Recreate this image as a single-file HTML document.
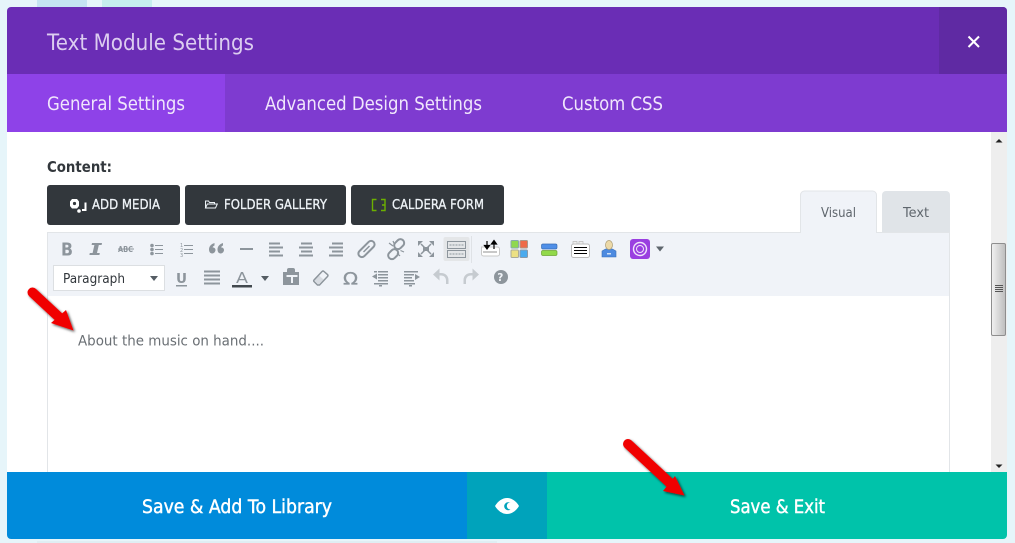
<!DOCTYPE html>
<html lang="en"><head><meta charset="utf-8"><title>Text Module Settings</title>
<style>
html,body{margin:0;padding:0;width:1015px;height:543px;overflow:hidden;background:#e6f5fa}
svg{display:block;position:absolute;left:0;top:0}
text{font-family:"DejaVu Sans","Liberation Sans",sans-serif}
</style></head><body>
<svg width="1015" height="543" viewBox="0 0 1015 543" xmlns="http://www.w3.org/2000/svg">
<defs>
<linearGradient id="th" x1="0" x2="1" y1="0" y2="0"><stop offset="0" stop-color="#f2f2f2"/><stop offset="1" stop-color="#bdbdbd"/></linearGradient>
<filter id="sh" x="-30%" y="-30%" width="170%" height="170%"><feDropShadow dx="1.500" dy="1.500" stdDeviation="1.200" flood-color="#000" flood-opacity=".65"/></filter>
<clipPath id="modal"><rect x="7" y="7" width="1000" height="532" rx="4"/></clipPath>
</defs>
<rect width="1015" height="543" fill="#e6f5fa"/>
<rect x="37" width="50" height="7" fill="#c5e4f2"/><rect x="102" width="50" height="7" fill="#c6eeee"/>
<rect x="37" y="541" width="460" height="2" fill="#dfeef3"/>
<g clip-path="url(#modal)">
<rect x="7" y="7" width="1000" height="532" fill="#fff"/>
<rect x="7" y="7" width="1000" height="67" fill="#6a2db5"/>
<rect x="939" y="7" width="68" height="67" fill="#5f2aa3"/>
<rect x="7" y="74" width="1000" height="58" fill="#7e3bd0"/>
<rect x="7" y="74" width="218" height="58" fill="#8e42e8"/>
<!-- scrollbar -->
<rect x="991" y="132" width="16" height="340" fill="#eeeeee"/>
<rect x="991.500" y="243.500" width="14" height="92" rx="1.500" fill="url(#th)" stroke="#8e8e8e"/>
<path d="M995 285.500h8M995 287.500h8M995 289.500h8M995 291.500h8" stroke="#555" stroke-width="1"/>
<path d="M999 139l-3.500 3.500h7z" fill="#222"/><path d="M999 468l-3.500-3.500h7z" fill="#222"/>
</g>
<text x="47" y="50" font-size="22.500" fill="#dccdf0" textLength="207" lengthAdjust="spacingAndGlyphs">Text Module Settings</text>
<path d="M968.500 36.500l10.500 10.500M979 36.500l-10.500 10.500" stroke="#fff" stroke-width="2"/>
<text x="47" y="110" font-size="18.500" fill="#f0e6fc" textLength="138" lengthAdjust="spacingAndGlyphs">General Settings</text>
<text x="265" y="110" font-size="18.500" fill="#f0e6fc" textLength="217" lengthAdjust="spacingAndGlyphs">Advanced Design Settings</text>
<text x="562" y="110" font-size="18.500" fill="#f0e6fc" textLength="101" lengthAdjust="spacingAndGlyphs">Custom CSS</text>
<text x="47" y="172" font-size="15.500" font-weight="bold" fill="#32373c" textLength="65" lengthAdjust="spacingAndGlyphs">Content:</text>
<!-- media buttons -->
<rect x="47" y="185" width="133" height="40" rx="3" fill="#32373c"/>
<rect x="185" y="185" width="161" height="40" rx="3" fill="#32373c"/>
<rect x="351" y="185" width="153" height="40" rx="3" fill="#32373c"/>
<path d="M70 201.500l2-2.500h5l2 2.500v4.500l-2 2.500h-5l-2-2.500z" fill="#fff"/><circle cx="74.500" cy="203.500" r="1.600" fill="#32373c"/>
<path d="M84.500 202.500h2v8.500h-4.500v-2h2.500z" fill="#fff"/><circle cx="79" cy="211" r="1.800" fill="#fff"/>
<text x="92" y="209" font-size="13" fill="#eef3f7" stroke="#eef3f7" stroke-width=".3" textLength="68" lengthAdjust="spacingAndGlyphs">ADD MEDIA</text>
<path d="M205.500 208v-7h3l1 1.500h5v1.500M205.500 208h10l1.800-4h-10z" fill="none" stroke="#eef3f7" stroke-width="1"/>
<text x="224" y="209" font-size="13" fill="#eef3f7" stroke="#eef3f7" stroke-width=".3" textLength="103" lengthAdjust="spacingAndGlyphs">FOLDER GALLERY</text>
<path d="M376.500 199.500h-4v11h4M381 199.500h4v11h-4M382 205h3" fill="none" stroke="#6cb000" stroke-width="1.400"/>
<text x="392" y="209" font-size="13" fill="#eef3f7" stroke="#eef3f7" stroke-width=".3" textLength="92" lengthAdjust="spacingAndGlyphs">CALDERA FORM</text>
<!-- editor -->
<rect x="47.500" y="232.500" width="902" height="260" fill="#fff" stroke="#e2e5e8"/>
<rect x="48" y="233" width="901" height="63" fill="#f0f3f8"/>
<path d="M800.500 232v-37a4 4 0 0 1 4-4h68a4 4 0 0 1 4 4v37" fill="#f0f3f8" stroke="#e2e5e8"/>
<rect x="801" y="231" width="75" height="3" fill="#f0f3f8"/>
<path d="M882 232v-37a4 4 0 0 1 4-4h60a4 4 0 0 1 4 4v37z" fill="#e0e4e8"/>
<text x="821" y="217" font-size="13" fill="#5f666d" textLength="35" lengthAdjust="spacingAndGlyphs">Visual</text>
<text x="903" y="217" font-size="13" fill="#5f666d" textLength="26" lengthAdjust="spacingAndGlyphs">Text</text>
<!-- footer -->
<path d="M7 472h460v67h-456a4 4 0 0 1-4-4z" fill="#008bdb"/>
<rect x="467" y="472" width="80" height="67" fill="#00a3bb"/>
<path d="M547 472h460v63a4 4 0 0 1-4 4h-456z" fill="#00c3aa"/>
<!-- toolbar row 1 -->
<g fill="#8d959c" stroke="none">
<text x="61" y="255.500" font-size="17.500" font-weight="bold" textLength="12" lengthAdjust="spacingAndGlyphs">B</text>
<path d="M92 243h10l-.4 2h-2.800l-1.800 8h2.800l-.4 2h-10l.4-2h2.800l1.800-8h-2.800z"/>
<text x="118" y="252" font-size="8" font-weight="bold" textLength="15" lengthAdjust="spacingAndGlyphs">ABC</text>
<rect x="118" y="248.500" width="16" height="1"/>
<circle cx="152" cy="245.500" r="1.800"/><circle cx="152" cy="249.500" r="1.800"/><circle cx="152" cy="253.500" r="1.800"/>
<path d="M155 245h8v1h-8zM155 249h8v1h-8zM155 253h8v1h-8z"/>
<text x="180" y="247" font-size="5">1</text><text x="180" y="252" font-size="5">2</text><text x="180" y="257" font-size="5">3</text>
<path d="M184 245h9v1h-9zM184 249h9v1h-9zM184 253h9v1h-9z"/>
<path d="M209 249.500c0-3 2-5.500 5.500-6.500v2.500c-1 .5-1.800 1-1.800 2 1.700 0 2.800 1 2.800 2.500s-1.300 3.500-3.300 3.500-3.200-1.800-3.200-4zM217.500 249.500c0-3 2-5.500 5.500-6.500v2.500c-1 .5-1.800 1-1.800 2 1.700 0 2.800 1 2.800 2.500s-1.300 3.500-3.300 3.500-3.200-1.800-3.200-4z"/>
<rect x="240" y="248" width="13" height="2"/>
<path d="M269 243h11v2h-11zM269 247h14v2h-14zM269 251h11v2h-11zM269 255h14v2h-14z" transform="translate(0,-.5)"/>
<path d="M301 243h11v2h-11zM299 247h14v2h-14zM301 251h11v2h-11zM299 255h14v2h-14z" transform="translate(0,-.5)"/>
<path d="M332 243h11v2h-11zM329 247h14v2h-14zM332 251h11v2h-11zM329 255h14v2h-14z" transform="translate(0,-.5)"/>
</g>
<g fill="none" stroke="#8d959c">
<rect x="356.500" y="245.500" width="20" height="7" rx="3.500" transform="rotate(-45 366.500 249)" stroke-width="2"/>
<path d="M363.500 252l6-6" stroke-width="1.500"/>
<rect x="393.500" y="240.500" width="11" height="7.500" rx="3.700" transform="rotate(-45 399 244)" stroke-width="2"/>
<rect x="387.500" y="250.500" width="11" height="7.500" rx="3.700" transform="rotate(-45 393 254)" stroke-width="2"/>
<path d="M389 243l4 3M393 241l1.500 3.500M400 256l-3-3M404 252l-3.500-1.500" stroke-width="1.200"/>
<path d="M421 244l10 10M431 244l-10 10" stroke-width="1.500"/>
</g>
<g fill="#8d959c">
<path d="M418 241h5l-5 5zM434 241v5l-5-5zM418 257v-5l5 5zM434 257h-5l5-5z"/>
<rect x="423" y="247" width="6" height="4"/>
</g>
<rect x="443.500" y="237" width="26" height="24" rx="2" fill="#e4e6e8"/>
<rect x="447.500" y="241.500" width="18" height="7" fill="none" stroke="#8d959c"/><rect x="447.500" y="250.500" width="18" height="7" fill="none" stroke="#8d959c"/>
<path d="M449.500 245h14M449.500 254h14" stroke="#8d959c" stroke-dasharray="2 1"/>
<rect x="471" y="236" width="1" height="27" fill="#dfe2e6"/>
<!-- coloured plugin icons -->
<path d="M481.500 247h16a2 2 0 0 1 2 2v5a2 2 0 0 1-2 2h-14a2 2 0 0 1-2-2z" fill="#fff" stroke="#c8c8c8"/>
<path d="M487 241v7M484.500 245.500l2.500 3.500 2.500-3.500zM494 249v-7M491.500 244l2.500-3.500 2.500 3.500z" stroke="#000" stroke-width="1.200" fill="#000"/>
<path d="M483 252h14" stroke="#777" stroke-width=".8"/>
<rect x="511" y="240.500" width="7.500" height="7.500" rx="1" fill="#8fd84f" stroke="#8aa"/><rect x="520" y="240.500" width="7.500" height="7.500" rx="1" fill="#ee6b48" stroke="#a98"/>
<rect x="511" y="250" width="7.500" height="7.500" rx="1" fill="#ece083" stroke="#aa9"/><rect x="520" y="250" width="7.500" height="7.500" rx="1" fill="#4aaaee" stroke="#89a"/>
<rect x="541.500" y="244" width="15.500" height="5" rx="1.500" fill="#4f8fe8" stroke="#3a6fb5" stroke-width=".7"/>
<rect x="541.500" y="250.500" width="15.500" height="5" rx="1.500" fill="#92d94a" stroke="#6ea535" stroke-width=".7"/>
<rect x="571.500" y="244" width="18" height="13.500" rx="2" fill="#fff" stroke="#bbb"/>
<path d="M573 241.500h4v2.500h-4zM579 241.500h4v2.500h-4z" fill="#eee" stroke="#bbb" stroke-width=".7"/>
<path d="M574 247.500h13M574 250.500h13M574 253.500h13" stroke="#000" stroke-width="1"/>
<path d="M602 257v-6l3.500-2h7l3.500 2v6z" fill="#4d8ae0" stroke="#3a6fb5" stroke-width=".6"/>
<ellipse cx="609" cy="245" rx="3.500" ry="4.500" fill="#ecd9a8" stroke="#a9986e" stroke-width=".7"/>
<rect x="607" y="253" width="4" height="1.500" fill="#cfe0f7"/>
<rect x="630" y="239" width="20" height="20" rx="3" fill="#9a3fe0"/>
<circle cx="640" cy="249" r="6.500" fill="none" stroke="#f1e4fb" stroke-width="1.400"/>
<circle cx="640" cy="249" r="3.500" fill="none" stroke="#f1e4fb" stroke-width="1"/>
<path d="M656 246.500h8l-4 5z" fill="#5e666d"/>
<!-- row 2 -->
<rect x="53.500" y="265.500" width="111" height="25" fill="#fff" stroke="#dcdfe2"/>
<text x="63" y="283" font-size="13" fill="#32373c" textLength="62" lengthAdjust="spacingAndGlyphs">Paragraph</text>
<path d="M150 276h8l-4 5z" fill="#555d64"/>
<text x="176" y="283" font-size="13.500" font-weight="bold" fill="#8d959c" textLength="11" lengthAdjust="spacingAndGlyphs">U</text>
<rect x="176" y="285" width="11" height="1.500" fill="#8d959c"/>
<path d="M204 270.500h16v2h-16zM204 274.500h16v2h-16zM204 278.500h16v2h-16zM204 282.500h16v2h-16z" fill="#8d959c"/>
<text x="236" y="283" font-size="15" fill="#8d959c" textLength="12" lengthAdjust="spacingAndGlyphs">A</text>
<rect x="232" y="285" width="20" height="2.500" fill="#42484e"/>
<path d="M261 276h8l-4 5z" fill="#555d64"/>
<path d="M283 272h4v-2a2 2 0 0 1 2-2h4a2 2 0 0 1 2 2v2h4v13h-16z" fill="#8d959c"/>
<path d="M286.500 275h11v2h-4.500v6h-2v-6h-4.500z" fill="#f0f3f8"/>
<path d="M314 280l8-8.500a1.500 1.500 0 0 1 2 0l3.500 3a1.500 1.500 0 0 1 0 2l-8 8.500h-2l-3.500-3.500a1 1 0 0 1 0-1.500z" fill="#f0f3f8" stroke="#8d959c" stroke-width="1.500"/>
<path d="M314 280l4.500 4.500 5-5-5-4.500z" fill="#8d959c" opacity=".25"/>
<text x="343" y="284.500" font-size="17" fill="#8d959c" stroke="#8d959c" stroke-width=".3" textLength="15" lengthAdjust="spacingAndGlyphs">Ω</text>
<path d="M378 271h10v1.500h-10zM378 274h10v1.500h-10zM378 277h10v1.500h-10zM378 280h10v1.500h-10zM374 283h14v1.500h-14zM374 271h3v1.500h-3zM379 285h3v1.500h-3z" fill="#8d959c"/>
<path d="M372 276.500l5-3v6z" fill="#8d959c"/>
<path d="M404 271h14v1.500h-14zM404 274h10v1.500h-10zM404 277h8v1.500h-8zM404 280h10v1.500h-10zM404 283h11v1.500h-11zM409 285h3v1.500h-3z" fill="#8d959c"/>
<path d="M420 277l-5-3v6z" fill="#8d959c"/>
<path d="M433 274.500l6.500-6v4.500h1.500c4.500 0 7.500 3 7.500 7v4h-2.500v-3.500c0-3-2-5-5-5h-1.500v5z" fill="#c6cbd0"/>
<path d="M479 274.500l-6.500-6v4.500h-1.500c-4.500 0-7.500 3-7.500 7v4h2.500v-3.500c0-3 2-5 5-5h1.500v5z" fill="#c6cbd0"/>
<circle cx="501" cy="277" r="7" fill="#8d959c"/>
<text x="497.300" y="281" font-size="10.500" font-weight="bold" fill="#f0f3f8">?</text>
<!-- content -->
<text x="78" y="345.500" font-size="14" fill="#6a6f74" textLength="186" lengthAdjust="spacingAndGlyphs">About the music on hand....</text>
<!-- footer text -->
<text x="142" y="513" font-size="18.500" fill="#fff" stroke="#fff" stroke-width=".45" textLength="190" lengthAdjust="spacingAndGlyphs">Save &amp; Add To Library</text>
<text x="730" y="513" font-size="18.500" fill="#fff" stroke="#fff" stroke-width=".45" textLength="95" lengthAdjust="spacingAndGlyphs">Save &amp; Exit</text>
<path d="M495 506c3-5 7.500-8 12-8s9 3 12 8c-3 5-7.500 8-12 8s-9-3-12-8z" fill="#fff"/>
<path d="M510.500 503a4 4 0 1 0 0 6.500 3.500 3.500 0 0 1-3.500-4.500 2.500 2.500 0 0 1 3.500-2z" fill="#00a3bb"/>
<!-- arrows -->
<g filter="url(#sh)" fill="#f00000" stroke="none">
<path d="M32.500 292.500L62 320" stroke="#f00000" stroke-width="10" stroke-linecap="round"/>
<path d="M66 310L73.500 330.500L51 323z"/>
<path d="M628 444L671 484" stroke="#f00000" stroke-width="10" stroke-linecap="round"/>
<path d="M675 476L684.500 495.500L663 491z"/>
</g>
</svg>
</body></html>
